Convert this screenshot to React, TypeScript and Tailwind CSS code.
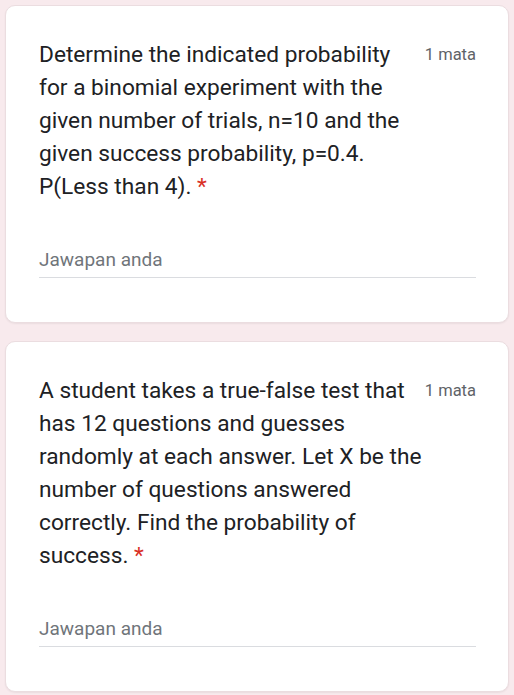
import React from 'react';

interface QuestionCardProps {
  lines: string[];
  points: string;
}

const QuestionCard: React.FC<QuestionCardProps> = ({ lines, points }) => {
  return (
    <div className="bg-white rounded-[10px] border border-[#ebdde0] shadow-[0_1px_2px_rgba(0,0,0,0.06)] pl-[33px] pr-[32px] pt-[32px] pb-[44px]">
      <div className="flex items-start justify-between">
        <div className="text-[22.7px] leading-[33px] text-[#202124] whitespace-nowrap">
          {lines.map((line, i) => (
            <div key={i}>
              {line}
              {i === lines.length - 1 && <span className="text-[#d93025]"> *</span>}
            </div>
          ))}
        </div>
        <div className="text-[16.5px] leading-[33px] text-[#5f6368] whitespace-nowrap">{points}</div>
      </div>
      <div className="mt-[45px] pb-[5px] border-b border-[#dadce0] text-[19px] leading-[24px] text-[#70757a]">
        Jawapan anda
      </div>
    </div>
  );
};

export default function App() {
  return (
    <div className="min-h-[695px] bg-[#f8eaed] px-[5px] pt-[5px] flex flex-col gap-[18px]" style={{ fontFamily: 'Roboto, "Noto Sans", sans-serif' }}>
      <QuestionCard
        points="1 mata"
        lines={[
          'Determine the indicated probability',
          'for a binomial experiment with the',
          'given number of trials, n=10 and the',
          'given success probability, p=0.4.',
          'P(Less than 4).',
        ]}
      />
      <QuestionCard
        points="1 mata"
        lines={[
          'A student takes a true-false test that',
          'has 12 questions and guesses',
          'randomly at each answer. Let X be the',
          'number of questions answered',
          'correctly. Find the probability of',
          'success.',
        ]}
      />
    </div>
  );
}
